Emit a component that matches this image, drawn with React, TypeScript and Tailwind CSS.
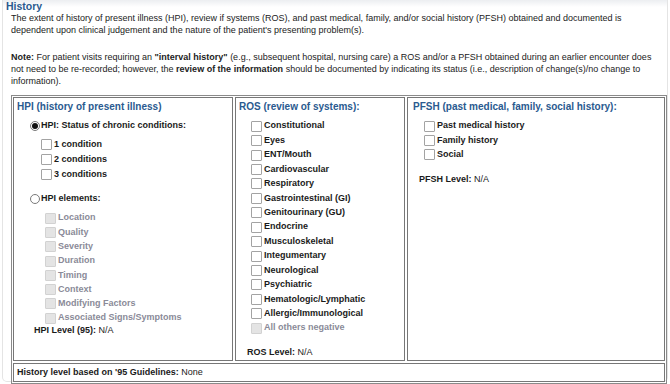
import React from "react";

const font = { fontFamily: '"Liberation Sans", Arial, sans-serif' };

function Box({ disabled = false }: { disabled?: boolean }) {
  return (
    <span
      className={
        disabled
          ? "inline-block w-[11px] h-[11px] border border-[#d2d2d2] bg-[#e4e4e4] rounded-[1px] shrink-0"
          : "inline-block w-[11px] h-[11px] border border-[#a3a3a3] bg-white rounded-[1px] shrink-0"
      }
    />
  );
}

function Radio({ checked = false }: { checked?: boolean }) {
  return (
    <span className="inline-flex items-center justify-center w-[10px] h-[10px] rounded-full border border-[#7a7a7a] bg-white shrink-0">
      {checked && <span className="block w-[6px] h-[6px] rounded-full bg-[#111]" />}
    </span>
  );
}

function CbRow({
  label,
  disabled = false,
  h = "h-[14.4px]",
  pl,
}: {
  label: string;
  disabled?: boolean;
  h?: string;
  pl: string;
}) {
  return (
    <div className={`flex items-center ${h} ${pl}`}>
      <Box disabled={disabled} />
      <span
        className={
          disabled
            ? "ml-[2px] text-[9px] font-bold text-[#8a8a98] whitespace-nowrap"
            : "ml-[2px] text-[9px] font-bold text-[#1a1a1a] whitespace-nowrap"
        }
      >
        {label}
      </span>
    </div>
  );
}

export default function App() {
  const ros = [
    "Constitutional",
    "Eyes",
    "ENT/Mouth",
    "Cardiovascular",
    "Respiratory",
    "Gastrointestinal (GI)",
    "Genitourinary (GU)",
    "Endocrine",
    "Musculoskeletal",
    "Integumentary",
    "Neurological",
    "Psychiatric",
    "Hematologic/Lymphatic",
    "Allergic/Immunological",
  ];
  const hpiEl = [
    "Location",
    "Quality",
    "Severity",
    "Duration",
    "Timing",
    "Context",
    "Modifying Factors",
    "Associated Signs/Symptoms",
  ];
  return (
    <div className="w-[670px] h-[384px] bg-white overflow-hidden" style={font}>
      <div className="mx-[2px] h-[382px] border-x border-b border-[#e4e4e4] rounded-b-[5px] bg-gradient-to-b from-[#eceef1] via-white to-white bg-[length:100%_14px] bg-no-repeat">
        <div className="h-[12px] pl-[3px] flex items-center text-[10.5px] font-bold text-[#2a5a8f] leading-none">
          History
        </div>
        <div className="pl-[8px] pr-[4px]">
          <p className="text-[9px] leading-[12px] text-[#222]">
            The extent of history of present illness (HPI), review if systems (ROS), and past medical, family, and/or social history (PFSH) obtained and documented is
            <br />
            dependent upon clinical judgement and the nature of the patient's presenting problem(s).
          </p>
          <p className="mt-[15px] text-[9px] leading-[12px] text-[#222]">
            <b>Note:</b> For patient visits requiring an <b>"interval history"</b> (e.g., subsequent hospital, nursing care) a ROS and/or a PFSH obtained during an earlier encounter does
            <br />
            not need to be re-recorded; however, the <b>review of the information</b> should be documented by indicating its status (i.e., description of change(s)/no change to
            <br />
            information).
          </p>
          <div className="mt-[8px] w-[656px] border border-[#8a8a8a] p-px">
            <div className="grid grid-cols-[220px_170px_1fr] gap-[2px]">
              {/* HPI */}
              <div className="h-[264px] border border-[#777] pt-[1px]">
                <div className="h-[14px] flex items-center pl-[3px] text-[10px] font-bold text-[#2a5a8f] whitespace-nowrap">
                  HPI (history of present illness)
                </div>
                <div className="mt-[6px] h-[14px] flex items-center pl-[16px]">
                  <Radio checked />
                  <span className="ml-[1px] text-[9px] font-bold text-[#1a1a1a] whitespace-nowrap">
                    HPI: Status of chronic conditions:
                  </span>
                </div>
                <div className="mt-[4px]">
                  <CbRow label="1 condition" h="h-[15px]" pl="pl-[27px]" />
                  <CbRow label="2 conditions" h="h-[15px]" pl="pl-[27px]" />
                  <CbRow label="3 conditions" h="h-[15px]" pl="pl-[27px]" />
                </div>
                <div className="mt-[10px] h-[14px] flex items-center pl-[16px]">
                  <Radio />
                  <span className="ml-[1px] text-[9px] font-bold text-[#1a1a1a] whitespace-nowrap">
                    HPI elements:
                  </span>
                </div>
                <div className="mt-[5px]">
                  {hpiEl.map((l) => (
                    <CbRow key={l} label={l} disabled h="h-[14.3px]" pl="pl-[31px]" />
                  ))}
                </div>
                <div className="h-[10px] flex items-center pl-[20px] text-[9px] text-[#1a1a1a] whitespace-nowrap">
                  <b>HPI Level (95):</b>&nbsp;N/A
                </div>
              </div>
              {/* ROS */}
              <div className="h-[264px] border border-[#777] pt-[1px]">
                <div className="h-[14px] flex items-center pl-[3px] text-[10px] font-bold text-[#2a5a8f] whitespace-nowrap">
                  ROS (review of systems):
                </div>
                <div className="mt-[6px]">
                  {ros.map((l) => (
                    <CbRow key={l} label={l} h="h-[14.43px]" pl="pl-[15px]" />
                  ))}
                  <CbRow label="All others negative" disabled h="h-[14.43px]" pl="pl-[15px]" />
                </div>
                <div className="mt-[10px] h-[14px] flex items-center pl-[11px] text-[9px] text-[#1a1a1a] whitespace-nowrap">
                  <b>ROS Level:</b>&nbsp;N/A
                </div>
              </div>
              {/* PFSH */}
              <div className="h-[264px] border border-[#777] pt-[1px]">
                <div className="h-[14px] flex items-center pl-[5px] text-[10px] font-bold text-[#2a5a8f] whitespace-nowrap">
                  PFSH (past medical, family, social history):
                </div>
                <div className="mt-[6px]">
                  <CbRow label="Past medical history" pl="pl-[16px]" />
                  <CbRow label="Family history" pl="pl-[16px]" />
                  <CbRow label="Social" pl="pl-[16px]" />
                </div>
                <div className="mt-[11px] h-[14px] flex items-center pl-[11px] text-[9px] text-[#1a1a1a] whitespace-nowrap">
                  <b>PFSH Level:</b>&nbsp;N/A
                </div>
              </div>
              {/* bottom */}
              <div className="col-span-3 h-[19px] border border-[#777] flex items-center pl-[3px] text-[9px] text-[#1a1a1a] whitespace-nowrap">
                <b>History level based on '95 Guidelines:</b>&nbsp;None
              </div>
            </div>
          </div>
        </div>
      </div>
    </div>
  );
}
